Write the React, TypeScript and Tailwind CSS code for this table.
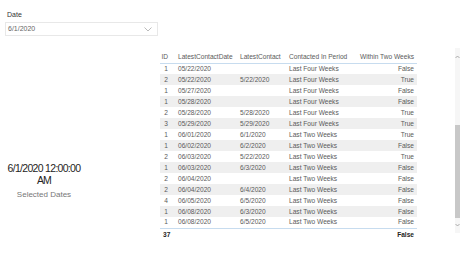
import React from "react";

type Row = { id: string; date: string; contact: string; period: string; within: string };

const rows: Row[] = [
  { id: "1", date: "05/22/2020", contact: "", period: "Last Four Weeks", within: "False" },
  { id: "2", date: "05/22/2020", contact: "5/22/2020", period: "Last Four Weeks", within: "True" },
  { id: "1", date: "05/27/2020", contact: "", period: "Last Four Weeks", within: "False" },
  { id: "1", date: "05/28/2020", contact: "", period: "Last Four Weeks", within: "False" },
  { id: "2", date: "05/28/2020", contact: "5/28/2020", period: "Last Four Weeks", within: "True" },
  { id: "3", date: "05/29/2020", contact: "5/29/2020", period: "Last Four Weeks", within: "True" },
  { id: "1", date: "06/01/2020", contact: "6/1/2020", period: "Last Two Weeks", within: "True" },
  { id: "1", date: "06/02/2020", contact: "6/2/2020", period: "Last Two Weeks", within: "False" },
  { id: "2", date: "06/03/2020", contact: "5/22/2020", period: "Last Two Weeks", within: "True" },
  { id: "1", date: "06/03/2020", contact: "6/3/2020", period: "Last Two Weeks", within: "False" },
  { id: "2", date: "06/04/2020", contact: "", period: "Last Two Weeks", within: "False" },
  { id: "2", date: "06/04/2020", contact: "6/4/2020", period: "Last Two Weeks", within: "False" },
  { id: "4", date: "06/05/2020", contact: "6/5/2020", period: "Last Two Weeks", within: "False" },
  { id: "1", date: "06/08/2020", contact: "6/3/2020", period: "Last Two Weeks", within: "False" },
  { id: "1", date: "06/08/2020", contact: "6/5/2020", period: "Last Two Weeks", within: "False" },
];

export default function App() {
  return (
    <div
      className="w-[474px] h-[253px] bg-white flex overflow-hidden cursor-default select-none"
      style={{ fontFamily: '"Liberation Sans", Arial, sans-serif' }}
    >
      {/* Left column */}
      <div className="w-[160px] flex flex-col">
        <div className="pl-[7px] pt-[10px] text-[7px] leading-[9px] text-[#333]">Date</div>
        <div className="mt-[3px] ml-[5px] w-[153px] h-[14px] border border-[#e8e8e8] flex items-center justify-between pl-[2px] pr-[5px]">
          <span className="text-[7px] text-[#666]">6/1/2020</span>
          <svg width="8" height="5" viewBox="0 0 8 5">
            <path d="M0.5 0.5 L4 4 L7.5 0.5" fill="none" stroke="#aaa" strokeWidth="0.8" />
          </svg>
        </div>
        <div className="mt-[127px] w-[88px] flex flex-col items-center text-[#252423]">
          <div className="text-[10.5px] leading-[11px] tracking-[-0.7px] whitespace-nowrap">6/1/2020 12:00:00</div>
          <div className="text-[10.5px] leading-[12px] tracking-[-0.9px]">AM</div>
          <div className="mt-[4px] text-[8px] leading-[10px] text-[#777]">Selected Dates</div>
        </div>
      </div>

      {/* Table */}
      <div className="pt-[51px]">
        <table className="border-collapse table-fixed w-[257px] text-[6.6px] text-[#5a5a5a]">
          <colgroup>
            <col className="w-[10px]" />
            <col className="w-[68px]" />
            <col className="w-[49px]" />
            <col className="w-[53px]" />
            <col className="w-[77px]" />
          </colgroup>
          <thead>
            <tr className="h-[12px] border-b border-[#c7dcef]">
              <th className="p-0 pr-[2px] text-right font-normal whitespace-nowrap">ID</th>
              <th className="p-0 pl-[8px] text-left font-normal whitespace-nowrap">LatestContactDate</th>
              <th className="p-0 pl-[2px] text-left font-normal whitespace-nowrap">LatestContact</th>
              <th className="p-0 pl-[2px] text-left font-normal whitespace-nowrap">Contacted In Period</th>
              <th className="p-0 pr-[3px] text-right font-normal whitespace-nowrap">Within Two Weeks</th>
            </tr>
          </thead>
          <tbody>
            {rows.map((r, i) => (
              <tr
                key={i}
                className={`h-[11px] ${i % 2 === 1 ? "bg-[#efefef]" : "bg-white"} ${
                  i === rows.length - 1 ? "border-b border-[#c7dcef]" : ""
                }`}
              >
                <td className="p-0 pr-[2px] text-right">{r.id}</td>
                <td className="p-0 pl-[8px] whitespace-nowrap">{r.date}</td>
                <td className="p-0 pl-[2px] whitespace-nowrap">{r.contact || "\u00a0"}</td>
                <td className="p-0 pl-[2px] whitespace-nowrap">{r.period}</td>
                <td className="p-0 pr-[3px] text-right">{r.within}</td>
              </tr>
            ))}
          </tbody>
          <tfoot>
            <tr className="h-[13px] font-bold text-[#252423]">
              <td className="p-0 pl-[3px]" colSpan={2}>37</td>
              <td className="p-0" />
              <td className="p-0" />
              <td className="p-0 pr-[3px] text-right">False</td>
            </tr>
          </tfoot>
        </table>
      </div>

      {/* Scrollbar */}
      <div className="ml-[38px] mt-[48px] w-[5px] h-[185px] bg-[#f6f6f6] flex flex-col items-center">
        <svg width="5" height="4" viewBox="0 0 5 4" className="mt-[7px]">
          <path d="M0.5 3 L2.5 1 L4.5 3" fill="none" stroke="#999" strokeWidth="0.8" />
        </svg>
        <div className="mt-[66px] w-[5px] h-[93px] bg-[#c8c8c8]" />
        <svg width="5" height="4" viewBox="0 0 5 4" className="mt-[5px]">
          <path d="M0.5 1 L2.5 3 L4.5 1" fill="none" stroke="#999" strokeWidth="0.8" />
        </svg>
      </div>
    </div>
  );
}
